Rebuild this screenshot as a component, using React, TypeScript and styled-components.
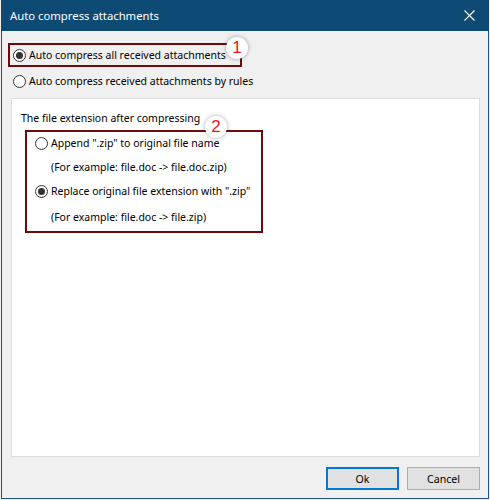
import React from 'react';
import styled, { createGlobalStyle } from 'styled-components';

const GlobalStyle = createGlobalStyle`
  html, body {
    margin: 0;
    padding: 0;
    background: #f0f0f0;
  }
  body {
    font-family: 'Noto Sans', 'Liberation Sans', sans-serif;
    font-size: 10.5px;
    color: #000;
  }
`;

const Window = styled.div`
  position: relative;
  box-sizing: border-box;
  width: 488px;
  height: 499px;
  margin-left: 1px;
  display: flex;
  flex-direction: column;
  background: #f0f0f0;
  border: 1px solid #1f5480;
  border-top: none;
`;

const TitleBar = styled.div`
  height: 31px;
  flex-shrink: 0;
  display: flex;
  align-items: center;
  justify-content: space-between;
  padding: 0 14px 0 9px;
  background: #0d4a74;
  color: #fff;
  font-size: 11.3px;
  margin: 0 -1px;
`;

const Body = styled.div`
  flex: 1;
  display: flex;
  flex-direction: column;
  padding: 12px 8px 8px 6px;
  min-height: 0;
`;

const Highlight = styled.div<{ $width: number }>`
  position: relative;
  box-sizing: border-box;
  width: ${p => p.$width}px;
  border: 2px solid #6e0a0a;
`;

const Badge = styled.div<{ $left: number; $top: number }>`
  position: absolute;
  left: ${p => p.$left}px;
  top: ${p => p.$top}px;
  width: 22px;
  height: 22px;
  border-radius: 50%;
  background: #fff;
  box-shadow: 0 0 4px rgba(0, 0, 0, 0.35);
  color: #e8141b;
  font-family: 'Liberation Sans', sans-serif;
  font-size: 17px;
  display: flex;
  align-items: center;
  justify-content: center;
`;

const OptionRow = styled.label<{ $height: number; $pad: number }>`
  display: flex;
  align-items: center;
  gap: 3px;
  height: ${p => p.$height}px;
  padding-left: ${p => p.$pad}px;
  white-space: nowrap;
`;

const RadioDot = styled.span<{ $checked?: boolean }>`
  box-sizing: border-box;
  width: 13px;
  height: 13px;
  border-radius: 50%;
  border: 1px solid #333;
  background: #fff;
  display: flex;
  align-items: center;
  justify-content: center;
  flex-shrink: 0;

  &::after {
    content: '';
    display: ${p => (p.$checked ? 'block' : 'none')};
    width: 7px;
    height: 7px;
    border-radius: 50%;
    background: #333;
  }
`;

const Panel = styled.div`
  flex: 1;
  margin: 5px 0 0 3px;
  box-sizing: border-box;
  background: #fff;
  border: 1px solid #dcdcdc;
  padding: 10px 0 0 9px;
`;

const Caption = styled.div`
  height: 18px;
  line-height: 18px;
`;

const Group = styled(Highlight)`
  margin: 3px 0 0 4px;
  padding: 0 0 1px 0;
`;

const Example = styled.div<{ $gap?: number }>`
  height: 26px;
  line-height: 26px;
  padding-left: 24px;
  margin-top: ${p => p.$gap ?? 0}px;
`;

const Footer = styled.div`
  display: flex;
  justify-content: flex-end;
  gap: 8px;
  padding-top: 10px;
`;

const Button = styled.button<{ $default?: boolean }>`
  box-sizing: border-box;
  width: 73px;
  height: 23px;
  font-family: inherit;
  font-size: 10.6px;
  color: #000;
  background: #e1e1e1;
  border: ${p => (p.$default ? '2px solid #0078d7' : '1px solid #adadad')};
  padding: 0;
`;

const Close = styled.svg`
  width: 11px;
  height: 11px;
`;

export default function App() {
  return (
    <>
      <GlobalStyle />
      <Window>
        <TitleBar>
          <span>Auto compress attachments</span>
          <Close viewBox="0 0 11 11">
            <path d="M0.5 0.5 L10.5 10.5 M10.5 0.5 L0.5 10.5" stroke="#fff" strokeWidth="1.1" />
          </Close>
        </TitleBar>
        <Body>
          <Highlight $width={234}>
            <OptionRow $height={20} $pad={3}>
              <RadioDot $checked />
              Auto compress all received attachments
            </OptionRow>
            <Badge $left={216} $top={-8}>1</Badge>
          </Highlight>
          <OptionRow $height={24} $pad={5} style={{ marginTop: 2 }}>
            <RadioDot />
            Auto compress received attachments by rules
          </OptionRow>
          <Panel>
            <Caption>The file extension after compressing</Caption>
            <Group $width={238}>
              <OptionRow $height={22} $pad={8}>
                <RadioDot />
                Append ".zip" to original file name
              </OptionRow>
              <Example>(For example: file.doc -&gt; file.doc.zip)</Example>
              <OptionRow $height={22} $pad={8}>
                <RadioDot $checked />
                Replace original file extension with ".zip"
              </OptionRow>
              <Example $gap={2}>(For example: file.doc -&gt; file.zip)</Example>
              <Badge $left={178} $top={-16}>2</Badge>
            </Group>
          </Panel>
          <Footer>
            <Button $default>Ok</Button>
            <Button>Cancel</Button>
          </Footer>
        </Body>
      </Window>
    </>
  );
}
